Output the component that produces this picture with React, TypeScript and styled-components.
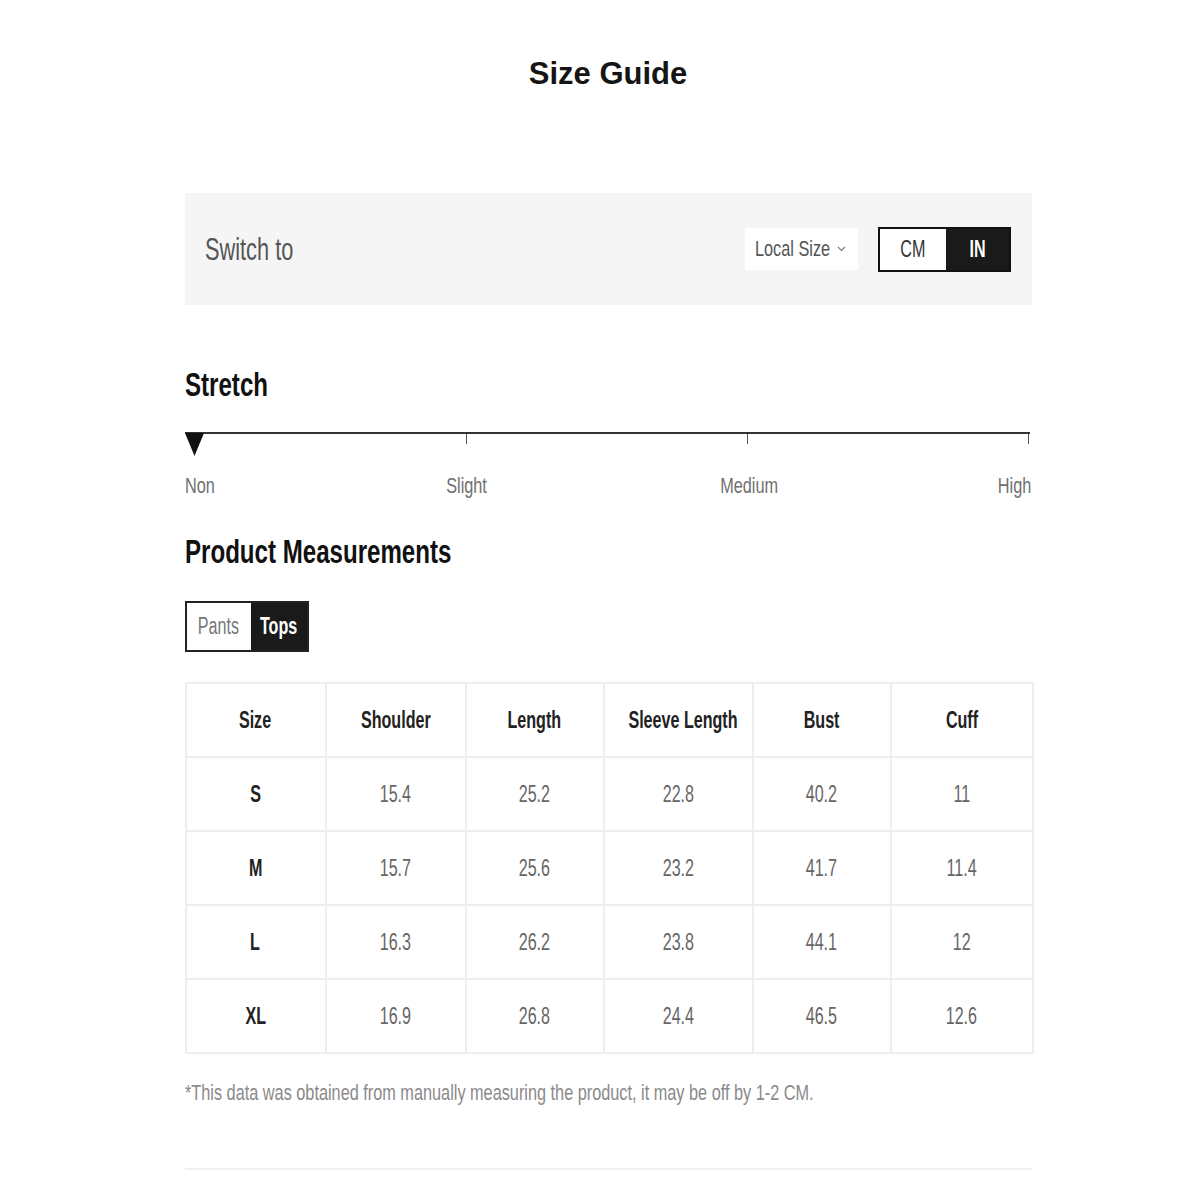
import React, { useState } from "react";
import styled, { createGlobalStyle, css } from "styled-components";

const GlobalStyle = createGlobalStyle`
	body {
		margin: 0;
		background: #ffffff;
		font-family: "Liberation Sans", Arial, sans-serif;
		color: #222;
	}
`;

// the shop font is a tall condensed sans: squeeze Liberation Sans to match
const narrow = (origin: string, sx = 0.72) => css`
	display: inline-block;
	white-space: nowrap;
	transform: scaleX(${sx});
	transform-origin: ${origin} center;
`;

const rows = [
	["S", "15.4", "25.2", "22.8", "40.2", "11"],
	["M", "15.7", "25.6", "23.2", "41.7", "11.4"],
	["L", "16.3", "26.2", "23.8", "44.1", "12"],
	["XL", "16.9", "26.8", "24.4", "46.5", "12.6"],
];

const headers = ["Size", "Shoulder", "Length", "Sleeve Length", "Bust", "Cuff"];
const colWidths = [140, 140, 138, 149, 138, 142];
const stretchLabels = ["Non", "Slight", "Medium", "High"];

export default function App() {
	const [unit, setUnit] = useState("IN");
	const [kind, setKind] = useState("Tops");

	return (
		<Page>
			<GlobalStyle />
			<Content>
				<Title>Size Guide</Title>

				<SwitchBar>
					<SwitchLabel>Switch to</SwitchLabel>
					<SwitchControls>
						<LocalSize>
							<LocalText>Local Size</LocalText>
							<svg width="9" height="6" viewBox="0 0 9 6">
								<path d="M1 1 L4.5 4.5 L8 1" fill="none" stroke="#777" strokeWidth="1.1" />
							</svg>
						</LocalSize>
						<Toggle>
							{["CM", "IN"].map(u => (
								<ToggleButton key={u} $active={unit === u} $w={u === "CM" ? 66 : 63} onClick={() => setUnit(u)}>
									<BtnText>{u}</BtnText>
								</ToggleButton>
							))}
						</Toggle>
					</SwitchControls>
				</SwitchBar>

				<SectionTitle>
					<HeadText>Stretch</HeadText>
				</SectionTitle>
				<Scale>
					<ScaleLine>
						<Tick />
						<Tick />
						<Tick />
						<Tick />
						<Marker>
							<svg width="19" height="23" viewBox="0 0 19 23">
								<path d="M0 0 L19 0 L9.5 23 Z" fill="#111" />
							</svg>
						</Marker>
					</ScaleLine>
					<ScaleLabels>
						{stretchLabels.map((l, i) => (
							<Anchor key={l} $pos={i === 0 ? "start" : i === 3 ? "end" : "center"}>
								<ScaleLabel $origin={i === 0 ? "left" : i === 3 ? "right" : "center"}>{l}</ScaleLabel>
							</Anchor>
						))}
					</ScaleLabels>
				</Scale>

				<SectionTitle $top={37}>
					<HeadText>Product Measurements</HeadText>
				</SectionTitle>
				<KindToggle>
					{["Pants", "Tops"].map(k => (
						<KindButton key={k} $active={kind === k} $w={k === "Pants" ? 64 : 56} onClick={() => setKind(k)}>
							<BtnText>{k}</BtnText>
						</KindButton>
					))}
				</KindToggle>

				<Table>
					<colgroup>
						{colWidths.map((w, i) => (
							<col key={i} style={{ width: w }} />
						))}
					</colgroup>
					<thead>
						<tr>
							{headers.map(h => (
								<HeadCell key={h}>
									<CellText>{h}</CellText>
								</HeadCell>
							))}
						</tr>
					</thead>
					<tbody>
						{rows.map(r => (
							<tr key={r[0]}>
								{r.map((v, i) => (
									<Cell key={i} $strong={i === 0}>
										<CellText>{v}</CellText>
									</Cell>
								))}
							</tr>
						))}
					</tbody>
				</Table>

				<Note>*This data was obtained from manually measuring the product, it may be off by 1-2 CM.</Note>
				<BottomRule />
			</Content>
		</Page>
	);
}

const Page = styled.div`
	width: 1200px;
	min-height: 1200px;
	box-sizing: border-box;
	padding-left: 16px;
`;

const Content = styled.div`
	width: 847px;
	margin: 0 auto;
	padding-top: 55px;
`;

const Title = styled.h1`
	margin: 0;
	text-align: center;
	font-size: 31px;
	line-height: 38px;
	font-weight: 700;
	color: #151515;
`;

const SwitchBar = styled.div`
	margin-top: 100px;
	height: 112px;
	background: #f5f5f5;
	display: flex;
	align-items: center;
	justify-content: space-between;
	padding: 0 21px 0 20px;
	box-sizing: border-box;
`;

const SwitchLabel = styled.span`
	font-size: 32px;
	color: #555;
	${narrow("left", 0.68)}
`;

const SwitchControls = styled.div`
	display: flex;
	align-items: center;
	gap: 20px;
`;

const LocalSize = styled.div`
	height: 42px;
	width: 113px;
	background: #fff;
	display: flex;
	align-items: center;
	padding-left: 10px;
	box-sizing: border-box;
	color: #555;
	svg {
		margin-left: -19px;
	}
`;

const LocalText = styled.span`
	font-size: 22px;
	${narrow("left", 0.74)}
`;

const Toggle = styled.div`
	display: flex;
	border: 2px solid #111;
	height: 45px;
	box-sizing: border-box;
`;

const ToggleButton = styled.button<{ $active: boolean; $w: number }>`
	width: ${p => p.$w}px;
	border: none;
	margin: 0;
	padding: 0;
	font-family: inherit;
	font-size: 23px;
	background: ${p => (p.$active ? "#1a1a1a" : "#fff")};
	color: ${p => (p.$active ? "#fff" : "#333")};
	font-weight: ${p => (p.$active ? 700 : 400)};
	cursor: pointer;
`;

const BtnText = styled.span`
	${narrow("center", 0.7)}
`;

const SectionTitle = styled.h2<{ $top?: number }>`
	margin: ${p => p.$top ?? 62}px 0 0;
	font-size: 33px;
	line-height: 36px;
	font-weight: 700;
	color: #111;
`;

const HeadText = styled.span`
	${narrow("left", 0.73)}
`;

const Scale = styled.div`
	margin-top: 29px;
`;

const ScaleLine = styled.div`
	position: relative;
	height: 11px;
	border-top: 2px solid #333;
	display: flex;
	justify-content: space-between;
	margin-right: 2px;
`;

const Tick = styled.span`
	width: 1.5px;
	height: 10px;
	background: #555;
	&:first-child {
		visibility: hidden;
	}
`;

const Marker = styled.div`
	position: absolute;
	left: 0;
	top: -1px;
	line-height: 0;
`;

const ScaleLabels = styled.div`
	margin-top: 28px;
	display: flex;
	justify-content: space-between;
	font-size: 22px;
	color: #707070;
	height: 24px;
`;

const Anchor = styled.div<{ $pos: string }>`
	width: 0;
	display: flex;
	justify-content: ${p => (p.$pos === "start" ? "flex-start" : p.$pos === "end" ? "flex-end" : "center")};
`;

const ScaleLabel = styled.span<{ $origin: string }>`
	${p => narrow(p.$origin, 0.74)}
`;

const KindToggle = styled.div`
	margin-top: 31px;
	display: inline-flex;
	border: 2px solid #222;
	height: 51px;
	box-sizing: border-box;
`;

const KindButton = styled.button<{ $active: boolean; $w: number }>`
	width: ${p => p.$w}px;
	border: none;
	margin: 0;
	padding: 0;
	font-family: inherit;
	font-size: 23px;
	background: ${p => (p.$active ? "#1a1a1a" : "#fff")};
	color: ${p => (p.$active ? "#fff" : "#777")};
	font-weight: ${p => (p.$active ? 700 : 400)};
	cursor: pointer;
`;

const Table = styled.table`
	margin-top: 30px;
	width: 847px;
	border-collapse: collapse;
	table-layout: fixed;
	border: 2px solid #eeeeee;
`;

const CellText = styled.span`
	${narrow("center", 0.7)}
`;

const HeadCell = styled.th`
	height: 72px;
	border: 2px solid #eeeeee;
	font-size: 23px;
	font-weight: 700;
	color: #222;
	text-align: center;
	padding: 0;
`;

const Cell = styled.td<{ $strong: boolean }>`
	height: 72px;
	border: 2px solid #eeeeee;
	font-size: 23px;
	text-align: center;
	padding: 0;
	font-weight: ${p => (p.$strong ? 700 : 400)};
	color: ${p => (p.$strong ? "#222" : "#666")};
`;

const Note = styled.p`
	margin: 26px 0 0;
	font-size: 22px;
	color: #8a8a8a;
	${narrow("left", 0.74)}
`;

const BottomRule = styled.div`
	margin-top: 62px;
	height: 2px;
	background: #f0f0f0;
`;
